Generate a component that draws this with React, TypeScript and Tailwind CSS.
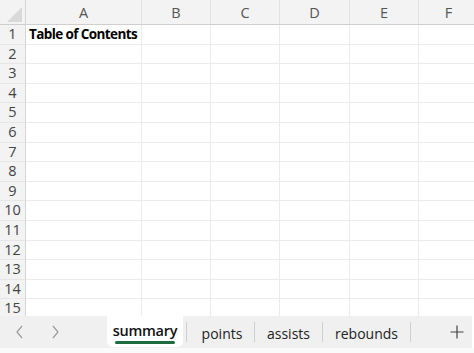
import React from "react";

const cols = [
  { l: "A", w: 116 },
  { l: "B", w: 69 },
  { l: "C", w: 69 },
  { l: "D", w: 70 },
  { l: "E", w: 69 },
  { l: "F", w: 60 },
];

const rows = Array.from({ length: 15 }, (_, i) => i + 1);

export default function App() {
  return (
    <div
      className="w-[474px] h-[353px] bg-white overflow-hidden relative"
      style={{ fontFamily: '"Open Sans", "Noto Sans", Arial, sans-serif' }}
    >
      {/* sheet */}
      <div className="h-[316px] overflow-hidden">
        {/* header row */}
        <div className="flex h-[25px] bg-[#f3f3f3] border-b border-[#cfcfcf]">
          <div className="w-[26px] shrink-0 border-r border-[#d6d6d6] relative">
            <svg width="26" height="25" className="absolute left-0 top-0">
              <polygon points="7,22 22,7 22,22" fill="#d9d9d9" />
            </svg>
          </div>
          {cols.map((c) => (
            <div
              key={c.l}
              style={{ width: c.w }}
              className="shrink-0 border-r border-[#e2e2e2] flex items-center justify-center text-[14.5px] text-[#555] pt-[1px]"
            >
              {c.l}
            </div>
          ))}
        </div>
        {rows.map((r) => (
          <div key={r} className="flex h-[19.6px]">
            <div className="w-[26px] shrink-0 bg-[#f3f3f3] border-r border-[#d6d6d6] border-b border-b-[#e6e6e6] flex items-center justify-center text-[14.5px] leading-none text-[#444]">
              {r}
            </div>
            {cols.map((c, i) => (
              <div
                key={c.l}
                style={{ width: c.w }}
                className="shrink-0 border-r border-b border-[#ebebeb] flex items-center"
              >
                {r === 1 && i === 0 ? (
                  <span className="pl-[3px] text-[13.5px] font-bold text-black whitespace-nowrap tracking-[-0.6px]">
                    Table of Contents
                  </span>
                ) : null}
              </div>
            ))}
          </div>
        ))}
      </div>

      {/* tab bar */}
      <div className="h-[32px] w-[472px] bg-[#f0f0f0] flex items-stretch relative">
        <div className="w-[40px] flex items-center justify-center">
          <svg width="10" height="14" viewBox="0 0 10 14">
            <path d="M7 1 L2 7 L7 13" stroke="#9a9a9a" strokeWidth="1.2" fill="none" />
          </svg>
        </div>
        <div className="w-[30px] flex items-center justify-center">
          <svg width="10" height="14" viewBox="0 0 10 14">
            <path d="M3 1 L8 7 L3 13" stroke="#9a9a9a" strokeWidth="1.2" fill="none" />
          </svg>
        </div>
        <div className="w-[37px]" />
        {/* active tab */}
        <div className="w-[76px] h-[31px] bg-white rounded-b-[6px] flex flex-col items-center justify-center relative">
          <span className="text-[14.5px] font-semibold text-[#111] leading-none -mt-[1px] tracking-[-0.3px]">summary</span>
          <div className="absolute left-[8px] right-[8px] top-[25px] h-[2.5px] bg-[#1d6b3f] rounded-full" />
        </div>
        <div className="w-[7px] flex items-center justify-center">
          <div className="w-px h-[20px] bg-[#cfcfcf]" />
        </div>
        <div className="w-[64px] flex items-center justify-center text-[14px] text-[#222] pt-[2px]">points</div>
        <div className="w-px flex items-center">
          <div className="w-px h-[20px] bg-[#cfcfcf]" />
        </div>
        <div className="w-[67px] flex items-center justify-center text-[14px] text-[#222] pt-[2px]">assists</div>
        <div className="w-px flex items-center">
          <div className="w-px h-[20px] bg-[#cfcfcf]" />
        </div>
        <div className="w-[87px] flex items-center justify-center text-[14px] text-[#222] pt-[2px]">rebounds</div>
        <div className="w-px flex items-center">
          <div className="w-px h-[20px] bg-[#cfcfcf]" />
        </div>
        <div className="flex-1 flex items-center justify-end pr-[8px]">
          <svg width="14" height="14" viewBox="0 0 14 14">
            <path d="M7 0.5 V13.5 M0.5 7 H13.5" stroke="#444" strokeWidth="1.2" />
          </svg>
        </div>
      </div>
      <div className="h-[5px] bg-[#fafafa]" />
    </div>
  );
}
